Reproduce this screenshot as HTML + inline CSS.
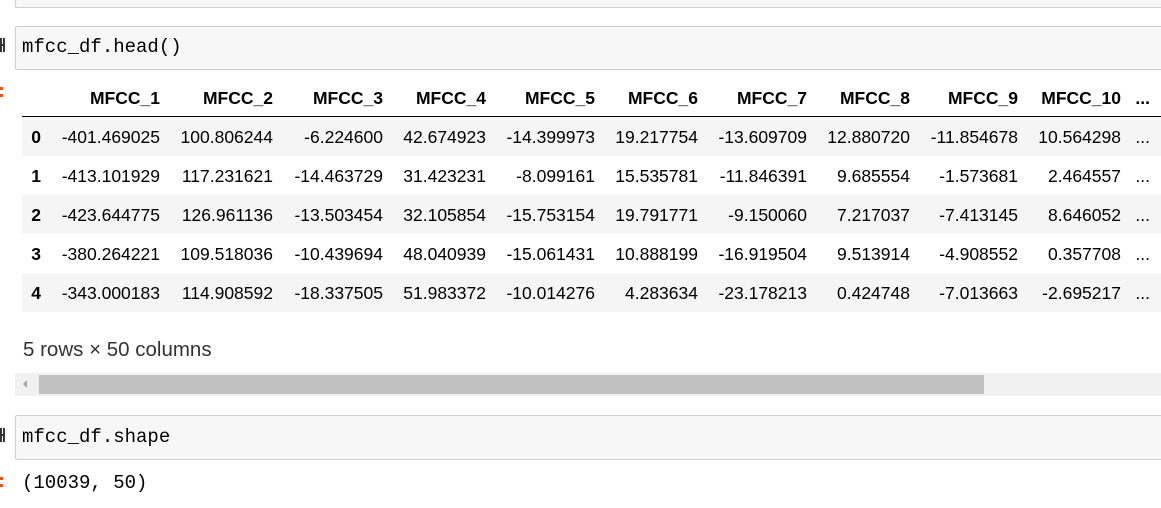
<!DOCTYPE html><html><head><style>
body{margin:0;width:1161px;height:508px;background:#fff;position:relative;overflow:hidden;font-family:"Liberation Sans",Arial,sans-serif;color:#000}
.box{position:absolute;left:15px;right:-5px;background:#f7f7f7;border:1px solid #cfcfcf;border-radius:2px}
.code{position:absolute;left:22px;font-family:"Liberation Mono",monospace;font-size:19px;color:#000}
.c{position:absolute;font-size:17.5px;text-align:right;white-space:nowrap}
.h{font-weight:bold;font-size:17.5px}
.stripe{position:absolute;left:22px;right:0;height:39px;background:#f5f5f5}
</style></head><body>
<div class="box" style="top:-5px;height:11px"></div>
<div class="box" style="top:26px;height:42px"></div>
<div class="code" style="top:36px">mfcc_df.head()</div>
<div style="position:absolute;left:0;top:38px;width:2px;height:14px;background:#333"></div>
<div style="position:absolute;left:3px;top:38px;width:2px;height:14px;background:#333"></div>
<div style="position:absolute;left:0;top:44px;width:5px;height:2px;background:#333"></div>
<div style="position:absolute;left:0;top:87px;width:3px;height:3px;background:#e5541c"></div>
<div style="position:absolute;left:0;top:94px;width:3px;height:3px;background:#e5541c"></div>
<div style="position:absolute;left:22px;right:0;top:116px;height:1px;background:#000"></div>
<div class="stripe" style="top:117px"></div>
<div class="stripe" style="top:195px"></div>
<div class="stripe" style="top:273px"></div>
<div id="t"></div>
<div style="position:absolute;left:23px;top:338px;font-size:20.5px;color:#333">5 rows × 50 columns</div>
<div style="position:absolute;left:15px;right:0;top:373px;height:23px;background:#f1f1f1"></div>
<div style="position:absolute;left:39px;width:945px;top:375px;height:19px;background:#c1c1c1"></div>
<div style="position:absolute;left:23px;top:380px;width:0;height:0;border-top:4px solid transparent;border-bottom:4px solid transparent;border-right:4px solid #a3a3a3"></div>
<div class="box" style="top:415px;height:43px"></div>
<div class="code" style="top:426px">mfcc_df.shape</div>
<div style="position:absolute;left:0;top:428px;width:2px;height:14px;background:#333"></div>
<div style="position:absolute;left:3px;top:428px;width:2px;height:14px;background:#333"></div>
<div style="position:absolute;left:0;top:434px;width:5px;height:2px;background:#333"></div>
<div style="position:absolute;left:0;top:477px;width:3px;height:3px;background:#e5541c"></div>
<div style="position:absolute;left:0;top:484px;width:3px;height:3px;background:#e5541c"></div>
<div class="code" style="top:472px">(10039, 50)</div>
<script>
var R=[160,273,383,486,595,698,807,910,1018,1121,1150];
var H=["MFCC_1","MFCC_2","MFCC_3","MFCC_4","MFCC_5","MFCC_6","MFCC_7","MFCC_8","MFCC_9","MFCC_10","..."];
var D=[
["-401.469025","100.806244","-6.224600","42.674923","-14.399973","19.217754","-13.609709","12.880720","-11.854678","10.564298","..."],
["-413.101929","117.231621","-14.463729","31.423231","-8.099161","15.535781","-11.846391","9.685554","-1.573681","2.464557","..."],
["-423.644775","126.961136","-13.503454","32.105854","-15.753154","19.791771","-9.150060","7.217037","-7.413145","8.646052","..."],
["-380.264221","109.518036","-10.439694","48.040939","-15.061431","10.888199","-16.919504","9.513914","-4.908552","0.357708","..."],
["-343.000183","114.908592","-18.337505","51.983372","-10.014276","4.283634","-23.178213","0.424748","-7.013663","-2.695217","..."]];
var s="";
function cell(x,y,t,b){s+='<div class="c'+(b?' h':'')+'" style="right:'+(1161-x)+'px;top:'+y+'px">'+t+'</div>';}
for(var i=0;i<H.length;i++)cell(R[i],88,H[i],1);
for(var r=0;r<5;r++){var y=127+r*39;cell(41,y,r,1);for(var i=0;i<11;i++)cell(R[i],y,D[r][i]);}
document.getElementById('t').innerHTML=s;
</script>
</body></html>
